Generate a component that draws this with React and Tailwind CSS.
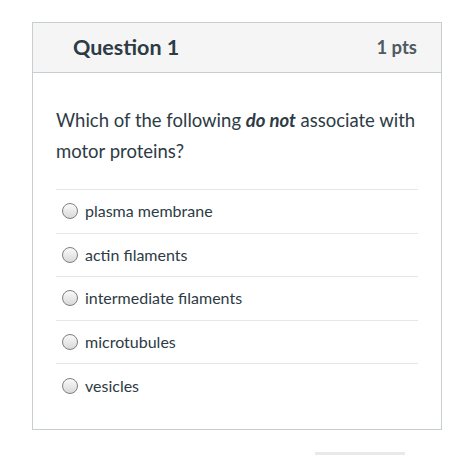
import React from "react";

const options = [
  "plasma membrane",
  "actin filaments",
  "intermediate filaments",
  "microtubules",
  "vesicles",
];

const Radio = () => (
  <span className="w-[16px] h-[16px] rounded-full border border-[#7b7f83] bg-gradient-to-b from-[#fafafa] to-[#d9d9d9] shrink-0" />
);

const App = () => {
  return (
    <div
      className="w-[474px] h-[455px] bg-white overflow-hidden pt-[22px] pl-[32px] text-[#2d3b45]"
      style={{ fontFamily: "Lato, 'Open Sans', sans-serif" }}
    >
      <div className="w-[410px] h-[408px] border border-[#c7cdd1]">
        <div className="h-[50px] bg-[#f5f5f5] border-b border-[#c7cdd1] flex items-center justify-between pl-[40px] pr-[24px]">
          <h2 className="text-[21.5px] font-bold text-[#2d3b45]">Question 1</h2>
          <span className="text-[18.5px] font-bold text-[#4f5a61]">1 pts</span>
        </div>
        <div className="pl-[23px] pr-[18px] pt-[32px]">
          <p className="text-[18.5px] leading-[31px]">
            Which of the following <strong className="italic font-bold">do not</strong> associate
            with motor proteins?
          </p>
          <div className="mt-[22px] mr-[5px] border-t border-[#e6e6e6]">
            {options.map((o, i) => (
              <div
                key={o}
                className={
                  "h-[43.5px] flex items-center gap-[7px] pl-[6px] " +
                  (i < options.length - 1 ? "border-b border-[#e6e6e6]" : "")
                }
              >
                <Radio />
                <span className="text-[16px]">{o}</span>
              </div>
            ))}
          </div>
        </div>
      </div>
      <div className="ml-[283px] mt-[22px] w-[90px] h-[10px] bg-[#e9e9e9]" />
    </div>
  );
};

export default App;
